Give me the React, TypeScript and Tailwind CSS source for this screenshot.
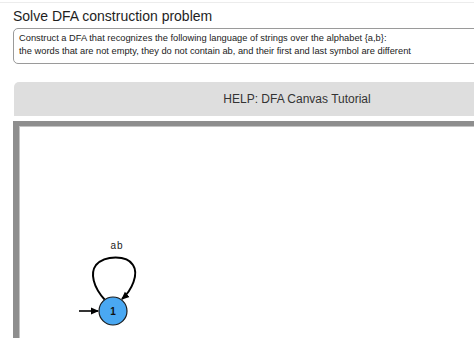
export default function App() {
  return (
    <div className="w-[474px] h-[338px] overflow-hidden bg-white font-['Liberation_Sans',Arial,sans-serif] text-[#222]">
      <div className="h-[3px] border-b border-[#ececec]" />
      <div className="w-[580px] pl-[13px]">
        <h1 className="text-[14px] leading-[18px] mt-[4px] text-[#1e1e1e]">Solve DFA construction problem</h1>
        {/* problem text */}
        <div className="mt-[3px] h-[36px] rounded-[5px] border-[1.5px] border-[#9a9a9a] px-[5px] pt-[3px] text-[9.3px] leading-[12.5px] text-[#222]">
          <p>Construct a DFA that recognizes the following language of strings over the alphabet {"{a,b}"}:</p>
          <p>the words that are not empty, they do not contain ab, and their first and last symbol are different</p>
        </div>

        {/* help */}
        <div className="mt-[18px] ml-[1px] h-[34px] rounded-tl-[5px] bg-[#dedede] flex items-center justify-center text-[12px] text-[#333]">
          HELP: DFA Canvas Tutorial
        </div>

        {/* canvas */}
        <div className="relative mt-[5px] h-[240px] border-l-[6px] border-t-[5px] border-[#8e8e8e] bg-white shadow-[inset_1px_1px_0_#c4c4c4]">
          <svg className="absolute left-[-6px] top-[-5px]" width="200" height="220" viewBox="0 0 200 220">
            <defs>
              <marker id="ah" markerWidth="8" markerHeight="8" refX="7" refY="4" orient="auto" markerUnits="userSpaceOnUse">
                <path d="M0,0.5 L8,4 L0,7.5 Z" fill="#000" />
              </marker>
            </defs>
            {/* start arrow */}
            <line x1="66" y1="190" x2="85" y2="190" stroke="#000" strokeWidth="1.6" markerEnd="url(#ah)" />
            {/* self loop */}
            <path d="M92,179 C80,166 77,152 83,144 C92,134 114,134 120,144 C126,153 119,169 109,178" fill="none" stroke="#000" strokeWidth="2" markerEnd="url(#ah)" />
            <text x="104" y="128" fontSize="10" textAnchor="middle" fontFamily="Liberation Sans, Arial, sans-serif" fill="#222" letterSpacing="1">ab</text>
            {/* state */}
            <circle cx="100" cy="190" r="14" fill="#4aa8f2" stroke="#1b1b1b" strokeWidth="1.2" />
            <text x="100" y="194" fontSize="10" fontWeight="bold" textAnchor="middle" fontFamily="Liberation Sans, Arial, sans-serif" fill="#111">1</text>
          </svg>
        </div>
      </div>
    </div>
  );
}
